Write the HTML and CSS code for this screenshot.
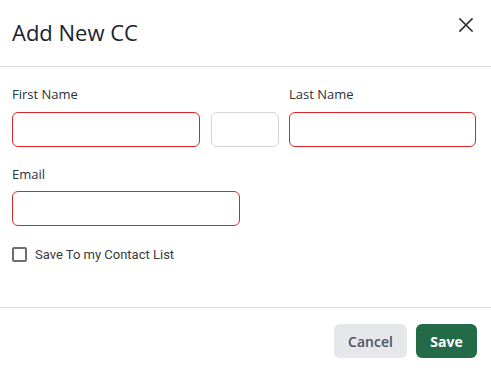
FILE: index.html
```html
<!DOCTYPE html>
<html>
<head>
<meta charset="utf-8">
<link rel="stylesheet" href="styles.css">
</head>
<body>
<div class="modal">
  <div class="modal-header">
    <h2 class="modal-title">Add New CC</h2>
    <button class="close-btn" aria-label="Close">
      <svg width="16" height="16" viewBox="0 0 16 16"><path d="M2 2 L14 14 M14 2 L2 14" stroke="#333" stroke-width="1.7" fill="none" stroke-linecap="square"/></svg>
    </button>
  </div>
  <div class="modal-body">
    <div class="name-grid">
      <label class="field-label">First Name</label>
      <span></span>
      <label class="field-label">Last Name</label>
      <input class="text-input invalid" type="text">
      <input class="text-input" type="text">
      <input class="text-input invalid" type="text">
    </div>
    <div class="email-field">
      <label class="field-label">Email</label>
      <input class="text-input invalid email-input" type="text">
    </div>
    <label class="check-row">
      <span class="checkbox"></span>
      <span class="check-label">Save To my Contact List</span>
    </label>
  </div>
  <div class="modal-footer">
    <button class="btn btn-cancel">Cancel</button>
    <button class="btn btn-save">Save</button>
  </div>
</div>
</body>
</html>
```
FILE: styles.css
```css
* { box-sizing: border-box; }
html, body { margin: 0; padding: 0; background: #fff; }
body { font-family: "Open Sans", "Noto Sans", sans-serif; color: #1f2433; }
.modal { width: 491px; height: 371px; display: flex; flex-direction: column; }
.modal-header {
  height: 67px;
  border-bottom: 1px solid #d9d9dc;
  display: flex;
  justify-content: space-between;
  align-items: flex-start;
  padding: 17px 17px 0 12px;
}
.modal-title { margin: 0; font-size: 22px; font-weight: 400; line-height: 30px; color: #1c2230; }
.close-btn { border: 0; background: none; padding: 0; margin-top: 0; width: 16px; height: 16px; display: block; }
.close-btn svg { display: block; }
.modal-body { height: 240px; padding: 18px 15px 0 12px; }
.field-label { display: block; font-size: 13px; line-height: 18px; color: #2b303b; }
.name-grid {
  display: grid;
  grid-template-columns: 188px 68px 1fr;
  column-gap: 10.5px;
  row-gap: 9px;
}
.text-input {
  display: block;
  width: 100%;
  height: 35px;
  border: 1px solid #d4d6dc;
  border-radius: 6px;
  background: #fff;
  outline: none;
  font: inherit;
  padding: 0 10px;
}
.text-input.invalid { border-color: #dc2626; }
.email-field { margin-top: 18px; }
.email-field .field-label { margin-bottom: 8px; }
.email-input { width: 228px; }
.check-row { display: flex; align-items: center; gap: 8px; margin-top: 21px; }
.checkbox { width: 15px; height: 15px; border: 2px solid #6e6e6e; border-radius: 2px; background: #fff; }
.check-label { font-family: Roboto, "Liberation Sans", sans-serif; font-size: 13px; color: #3a3a3a; }
.modal-footer {
  flex: 1;
  border-top: 1px solid #d9d9dc;
  display: flex;
  justify-content: flex-end;
  align-items: flex-start;
  gap: 9px;
  padding: 16px 14px 0 0;
}
.btn {
  height: 34px;
  border: 0;
  border-radius: 6px;
  font-family: "Open Sans", "Noto Sans", sans-serif;
  font-size: 14px;
  font-weight: 600;
  padding: 0;
}
.btn-cancel { width: 73px; background: #e5e7eb; color: #4b5263; }
.btn-save { width: 61px; background: #236a48; color: #fff; font-weight: 700; }
```
